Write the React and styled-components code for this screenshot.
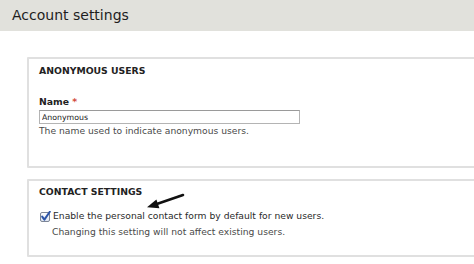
import React from 'react'
import styled, { createGlobalStyle } from 'styled-components'

const Global = createGlobalStyle`
  html, body {
    margin: 0;
    padding: 0;
    background: #fff;
    overflow: hidden;
  }
  body {
    font-family: "DejaVu Sans", "Liberation Sans", sans-serif;
    color: #333;
  }
`

const Header = styled.header`
  height: 31px;
  background: #e1e1dc;
  padding-left: 12px;
  font-size: 14px;
  line-height: 31px;
  color: #1e1e1e;
`

const Content = styled.main`
  padding: 26px 0 0 27px;
  display: flex;
  flex-direction: column;
  gap: 11px;
`

const Panel = styled.section`
  position: relative;
  margin-right: -10px;
  border: 2px solid #e0e0e0;
  border-radius: 1px;
  padding: ${p => p.$pad};
  display: flex;
  flex-direction: column;
`

const Legend = styled.h2`
  margin: 0;
  font-size: 9.3px;
  line-height: 14px;
  font-weight: bold;
  text-transform: uppercase;
  color: #222;
`

const Label = styled.label`
  margin-top: ${p => p.$top || 0}px;
  font-size: 9.3px;
  line-height: 14px;
  font-weight: bold;
  color: #222;
`

const Req = styled.span`
  color: #d24a3c;
`

const Input = styled.input`
  box-sizing: border-box;
  margin: 1px 0 0;
  width: 261px;
  height: 14px;
  padding: 0 2px;
  border: 1px solid #b4b4b4;
  border-top-color: #9a9a9a;
  font-family: "DejaVu Sans", sans-serif;
  font-size: 7.8px;
  color: #222;
  outline: none;
`

const Desc = styled.div`
  font-size: 9.2px;
  line-height: 14px;
  color: #4a4a4a;
  padding-left: ${p => p.$indent || 0}px;
`

const CheckRow = styled.div`
  margin-top: 10px;
  display: flex;
  align-items: center;
  gap: 2px;
  font-size: 9.2px;
  line-height: 14px;
  color: #2a2a2a;
`

const Box = styled.span`
  display: inline-flex;
  width: 11px;
  height: 11px;
  margin-left: 1px;
`

const Arrow = styled.svg`
  position: absolute;
  left: 112px;
  top: 8px;
  width: 50px;
  height: 24px;
  pointer-events: none;
`

function Checkbox() {
  return (
    <Box>
      <svg width="11" height="11" viewBox="0 0 11 11">
        <defs>
          <linearGradient id="cb" x1="0" y1="0" x2="0" y2="1">
            <stop offset="0" stopColor="#ffffff" />
            <stop offset="1" stopColor="#dfe6f2" />
          </linearGradient>
        </defs>
        <rect x="0.5" y="1.5" width="9" height="9" rx="1.5" fill="url(#cb)" stroke="#7d8696" />
        <path d="M2.2 5.6 L4.4 8.6 L9.8 0.8" fill="none" stroke="#2c55a8" strokeWidth="2" strokeLinecap="round" strokeLinejoin="round" />
      </svg>
    </Box>
  )
}

export default function App() {
  return (
    <>
      <Global />
      <Header>Account settings</Header>
      <Content>
        <Panel $pad="5px 10px 28px">
          <Legend>Anonymous users</Legend>
          <Label $top={17}>
            Name <Req>*</Req>
          </Label>
          <Input defaultValue="Anonymous" />
          <Desc>The name used to indicate anonymous users.</Desc>
        </Panel>
        <Panel $pad="4px 10px 16px">
          <Legend>Contact settings</Legend>
          <CheckRow>
            <Checkbox />
            Enable the personal contact form by default for new users.
          </CheckRow>
          <Desc $indent={13} style={{ marginTop: 2 }}>
            Changing this setting will not affect existing users.
          </Desc>
          <Arrow viewBox="0 0 50 24">
            <line x1="42" y1="6" x2="16.5" y2="14.8" stroke="#111" strokeWidth="2.6" strokeLinecap="round" />
            <polygon points="6,18.3 18.4,19.2 15.4,10.4" fill="#111" />
          </Arrow>
        </Panel>
      </Content>
    </>
  )
}
